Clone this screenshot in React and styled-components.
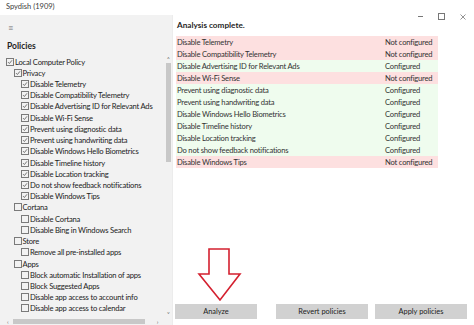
import React from 'react';
import styled, { createGlobalStyle } from 'styled-components';

const GlobalStyle = createGlobalStyle`
	html, body {
		margin: 0;
		padding: 0;
		background: #ffffff;
	}
	body {
		font-family: 'Segoe UI', Lato, 'Noto Sans', sans-serif;
		color: #1f1f1f;
	}
`;

const Window = styled.div`
	position: relative;
	width: 474px;
	height: 325px;
	display: grid;
	grid-template-columns: 172px 1fr;
	grid-template-rows: 15px 1fr;
	overflow: hidden;
	background: #ffffff;
`;

const TitleBar = styled.div`
	grid-column: 1 / 3;
	display: flex;
	align-items: flex-start;
	justify-content: space-between;
	height: 15px;
`;

const Title = styled.div`
	font-size: 7.5px;
	color: #3c3c3c;
	padding: 2px 0 0 6px;
	line-height: 10px;
`;

const Controls = styled.div`
	display: flex;
	align-items: center;
	padding: 13px 8px 0 0;
`;

const Minimize = styled.span`
	width: 5px;
	height: 0.8px;
	background: #777;
	margin-right: 15px;
`;

const Maximize = styled.span`
	width: 5px;
	height: 5px;
	border: 0.8px solid #777;
	margin-right: 15px;
`;

const Close = styled.svg`
	display: block;
`;

const Nav = styled.div`
	background: #f2f2f2;
	display: flex;
	flex-direction: column;
	min-height: 0;
`;

const Hamburger = styled.div`
	font-size: 9px;
	color: #707070;
	padding: 7px 0 0 8px;
	line-height: 12px;
	height: 12px;
`;

const NavHeading = styled.div`
	font-weight: 700;
	font-size: 8.5px;
	padding: 6px 0 0 7px;
	line-height: 12px;
	height: 14px;
`;

const TreeArea = styled.div`
	flex: 1;
	min-height: 0;
	display: grid;
	grid-template-columns: 1fr 7px;
	grid-template-rows: 1fr 8px;
	padding-top: 2px;
`;

const TreeList = styled.div`
	overflow: hidden;
`;

const TreeRow = styled.div`
	display: flex;
	align-items: center;
	height: 11.23px;
	padding-left: ${({ level }) => 6 + level * 7.5}px;
	font-size: 7.6px;
	letter-spacing: -0.2px;
	white-space: nowrap;
	color: #222;
`;

const Box = styled.span`
	display: inline-flex;
	align-items: center;
	justify-content: center;
	width: 6px;
	height: 6px;
	border: 0.8px solid #7a7a7a;
	margin-right: 1px;
	flex-shrink: 0;
	svg {
		display: block;
	}
`;

const VScroll = styled.div`
	display: flex;
	flex-direction: column;
	align-items: center;
`;

const VThumb = styled.div`
	width: 5px;
	height: 99px;
	background: #c8c8c8;
	margin-top: 1px;
`;

const Arrow = styled.div`
	height: 6px;
	line-height: 6px;
	font-size: 6px;
	color: #606060;
`;

const Spacer = styled.div`
	flex: 1;
`;

const HScroll = styled.div`
	display: flex;
	align-items: center;
	font-size: 6px;
	color: #606060;
	padding-left: 7px;
`;

const HThumb = styled.div`
	width: 132px;
	height: 5px;
	background: #c8c8c8;
	margin: 0 12px 0 4px;
`;

const Main = styled.div`
	display: flex;
	flex-direction: column;
	padding: 4px 0 6px 4px;
	border-left: 1px solid #ececec;
	min-height: 0;
`;

const Status = styled.div`
	font-weight: 700;
	font-size: 8.2px;
	line-height: 12px;
	height: 17px;
`;

const Table = styled.div`
	width: 262px;
	display: flex;
	flex-direction: column;
	margin-left: -1px;
`;

const Row = styled.div`
	display: grid;
	grid-template-columns: 208px 1fr;
	height: 12px;
	align-items: center;
	font-size: 7.6px;
	letter-spacing: -0.2px;
	color: #333;
	padding-left: 1px;
	background: ${({ ok }) => (ok ? '#effcee' : '#fde0e0')};
`;

const ButtonBar = styled.div`
	margin-top: auto;
	display: flex;
`;

const Button = styled.div`
	width: ${({ w }) => w}px;
	margin-left: ${({ gap }) => gap}px;
	height: 15px;
	background: #d1d1d1;
	display: flex;
	align-items: center;
	justify-content: center;
	font-size: 7.4px;
	color: #222;
`;

const Annotation = styled.svg`
	position: absolute;
	left: 196px;
	top: 246px;
	pointer-events: none;
`;

const Check = () => (
	<svg width="6" height="6" viewBox="0 0 6 6">
		<path d="M1 3.1 L2.4 4.5 L5 1.3" fill="none" stroke="#555" strokeWidth="0.8" />
	</svg>
);

const tree = [
	[0, 'Local Computer Policy', true],
	[1, 'Privacy', true],
	[2, 'Disable Telemetry', true],
	[2, 'Disable Compatibility Telemetry', true],
	[2, 'Disable Advertising ID for Relevant Ads', true],
	[2, 'Disable Wi-Fi Sense', true],
	[2, 'Prevent using diagnostic data', true],
	[2, 'Prevent using handwriting data', true],
	[2, 'Disable Windows Hello Biometrics', true],
	[2, 'Disable Timeline history', true],
	[2, 'Disable Location tracking', true],
	[2, 'Do not show feedback notifications', true],
	[2, 'Disable Windows Tips', true],
	[1, 'Cortana', false],
	[2, 'Disable Cortana', false],
	[2, 'Disable Bing in Windows Search', false],
	[1, 'Store', false],
	[2, 'Remove all pre-installed apps', false],
	[1, 'Apps', false],
	[2, 'Block automatic Installation of apps', false],
	[2, 'Block Suggested Apps', false],
	[2, 'Disable app access to account info', false],
	[2, 'Disable app access to calendar', false],
];

const results = [
	['Disable Telemetry', false],
	['Disable Compatibility Telemetry', false],
	['Disable Advertising ID for Relevant Ads', true],
	['Disable Wi-Fi Sense', false],
	['Prevent using diagnostic data', true],
	['Prevent using handwriting data', true],
	['Disable Windows Hello Biometrics', true],
	['Disable Timeline history', true],
	['Disable Location tracking', true],
	['Do not show feedback notifications', true],
	['Disable Windows Tips', false],
];

export default () => (
	<>
		<GlobalStyle />
		<Window>
			<TitleBar>
				<Title>Spydish (1909)</Title>
				<Controls>
					<Minimize />
					<Maximize />
					<Close width="6" height="6" viewBox="0 0 6 6">
						<path d="M0.5 0.5 L5.5 5.5 M5.5 0.5 L0.5 5.5" stroke="#777" strokeWidth="0.8" />
					</Close>
				</Controls>
			</TitleBar>
			<Nav>
				<Hamburger>≡</Hamburger>
				<NavHeading>Policies</NavHeading>
				<TreeArea>
					<TreeList>
						{tree.map(([level, label, checked]) => (
							<TreeRow key={label} level={level}>
								<Box>{checked && <Check />}</Box>
								{label}
							</TreeRow>
						))}
					</TreeList>
					<VScroll>
						<Arrow>˄</Arrow>
						<VThumb />
						<Spacer />
						<Arrow>˅</Arrow>
					</VScroll>
					<HScroll>
						<span>‹</span>
						<HThumb />
						<span>›</span>
					</HScroll>
				</TreeArea>
			</Nav>
			<Main>
				<Status>Analysis complete.</Status>
				<Table>
					{results.map(([name, ok]) => (
						<Row key={name} ok={ok}>
							<span>{name}</span>
							<span>{ok ? 'Configured' : 'Not configured'}</span>
						</Row>
					))}
				</Table>
				<ButtonBar>
					<Button w={82} gap={-2}>Analyze</Button>
					<Button w={92} gap={19}>Revert policies</Button>
					<Button w={92} gap={7}>Apply policies</Button>
				</ButtonBar>
			</Main>
			<Annotation width="48" height="58" viewBox="196 246 48 58">
				<path
					d="M209 249 L229 249 L229 274 L240 274 L220 300 L199 274 L209 274 Z"
					fill="none"
					stroke="#d4202f"
					strokeWidth="1.6"
					strokeLinejoin="miter"
				/>
			</Annotation>
		</Window>
	</>
);
